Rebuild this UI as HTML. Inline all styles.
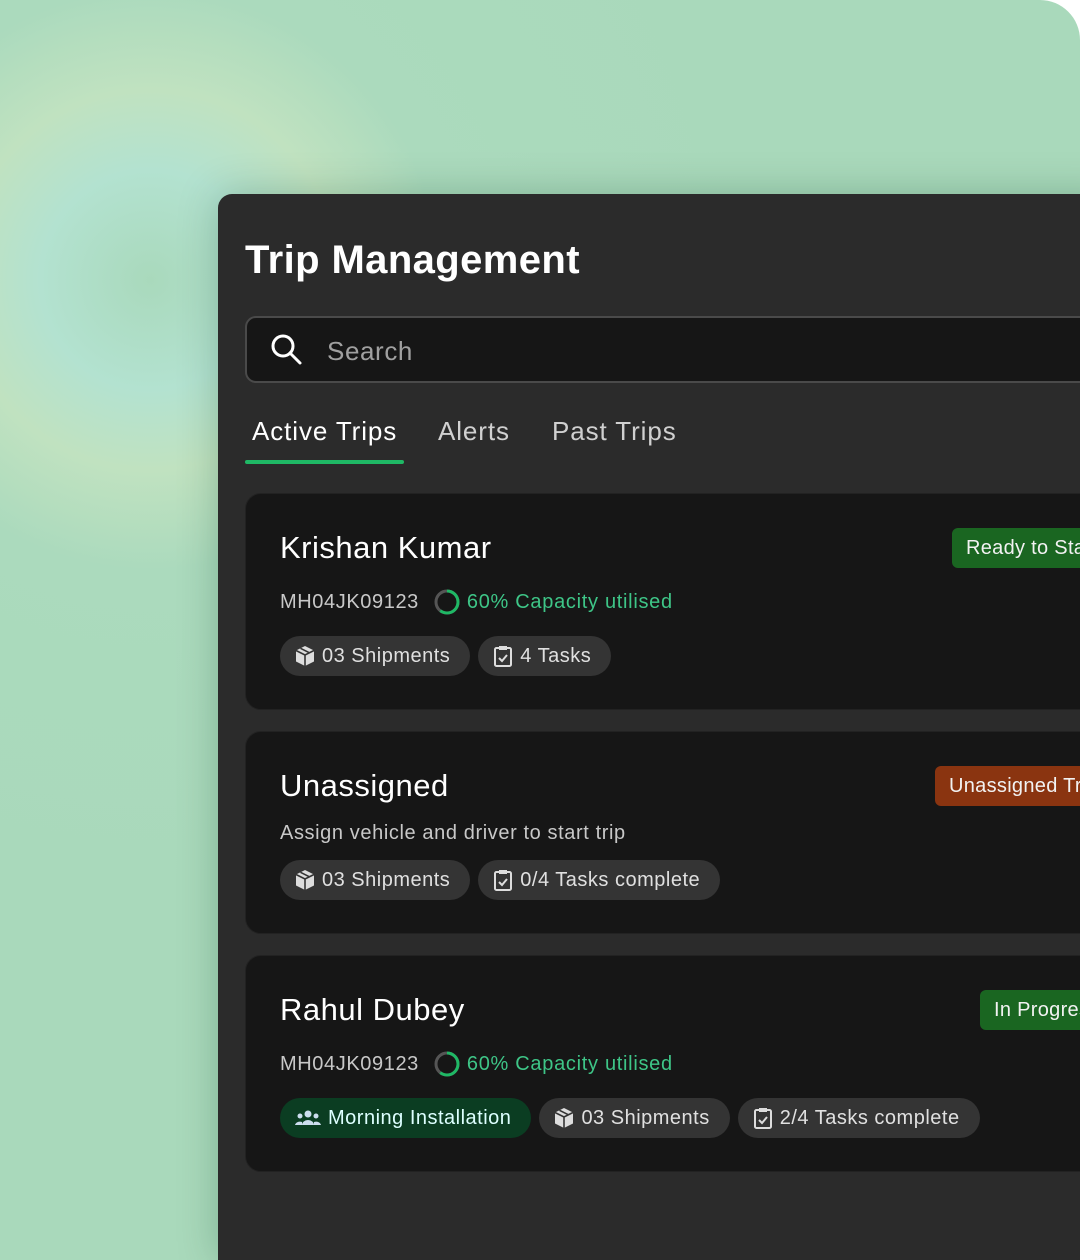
<!DOCTYPE html>
<html><head><style>
*{margin:0;padding:0;box-sizing:border-box}
html,body{width:1080px;height:1260px;overflow:hidden}
body{font-family:"Liberation Sans",sans-serif;background:#fff;position:relative}
.bg{position:absolute;inset:0;border-top-right-radius:40px;background:radial-gradient(circle at 150px 280px,#a9d9bc 0,#b3e2d0 110px,#c0e2c0 190px,#abdabd 290px,#a9d9bb 600px)}
.panel{position:absolute;left:218px;top:194px;width:900px;height:1066px;background:#2b2b2b;border-radius:14px 14px 0 0;box-shadow:0 0 40px rgba(0,60,30,.25)}
.abs{position:absolute}
h1{position:absolute;left:27px;top:44px;font-size:40px;font-weight:bold;color:#fff;letter-spacing:.4px}
.search{position:absolute;left:27px;top:122px;width:900px;height:67px;background:#161616;border:2px solid #4a4a4a;border-radius:11px}
.search span{position:absolute;left:80px;top:18px;font-size:26px;color:#a0a0a0;letter-spacing:.6px}
.tab{position:absolute;top:222px;font-size:26px;color:#d0d0d0;letter-spacing:.9px}
.card{position:absolute;left:27px;width:900px;background:#161616;border-radius:16px;border:1px solid #222}
.name{position:absolute;left:34px;font-size:31px;color:#fff;letter-spacing:.5px}
.sub{position:absolute;left:34px;font-size:20px;color:#c8c8c8;display:flex;align-items:center;letter-spacing:.6px}
.green{color:#3ec587;letter-spacing:.7px}
.pills{position:absolute;left:34px;display:flex;gap:8px}
.pill{height:40px;border-radius:20px;background:#343434;color:#e0e0e0;font-size:20px;display:flex;align-items:center;padding:0 20px 0 14px;gap:6px;letter-spacing:.5px}
.badge{position:absolute;height:40px;border-radius:6px;font-size:20px;color:#f2f2f2;padding:9px 14px;white-space:nowrap;letter-spacing:.3px}
</style></head><body>
<div class="bg"></div>
<div class="panel">
<h1>Trip Management</h1>
<div class="search">
<svg class="abs" style="left:22px;top:14px" width="36" height="36" viewBox="0 0 36 36"><circle cx="14" cy="14" r="10" fill="none" stroke="#fff" stroke-width="3"/><path d="M21 21l10 10" stroke="#fff" stroke-width="3" stroke-linecap="round"/></svg>
<span>Search</span></div>
<div class="tab" style="left:34px;color:#fff">Active Trips</div>
<div class="tab" style="left:220px">Alerts</div>
<div class="tab" style="left:334px">Past Trips</div>
<div class="abs" style="left:27px;top:266px;width:159px;height:4px;background:#1fb865;border-radius:2px"></div>

<div class="card" style="top:299px;height:217px">
<div class="name" style="top:36px">Krishan Kumar</div>
<div class="sub" style="top:94px">MH04JK09123
<svg style="margin:0 6px 0 14px" width="28" height="28" viewBox="0 0 28 28"><circle cx="14" cy="14" r="11" fill="none" stroke="#555" stroke-width="3"/><circle cx="14" cy="14" r="11" fill="none" stroke="#1fb865" stroke-width="3" stroke-dasharray="41.5 69.1" transform="rotate(-90 14 14)"/></svg><span class="green">60% Capacity utilised</span></div>
<div class="pills" style="top:142px">
<div class="pill"><svg width="22" height="22" viewBox="0 0 22 22"><path d="M11 1L20 5.5V16.5L11 21L2 16.5V5.5Z" fill="#ddd"/><path d="M2 5.5L11 10L20 5.5M11 10V21M6.5 3.3L15.5 7.8" stroke="#343434" stroke-width="1.6" fill="none"/></svg>03 Shipments</div>
<div class="pill"><svg width="22" height="22" viewBox="0 0 22 22"><rect x="3" y="3" width="16" height="18" rx="1.5" fill="none" stroke="#ddd" stroke-width="2"/><rect x="7" y="1" width="8" height="4" fill="#ddd"/><path d="M7 13l3 3 5-6" stroke="#ddd" stroke-width="2" fill="none"/></svg>4 Tasks</div></div>
<div class="badge" style="left:706px;top:34px;background:#1a6621">Ready to Start</div>
</div>

<div class="card" style="top:537px;height:203px">
<div class="name" style="top:36px">Unassigned</div>
<div class="sub" style="top:90px">Assign vehicle and driver to start trip</div>
<div class="pills" style="top:128px">
<div class="pill"><svg width="22" height="22" viewBox="0 0 22 22"><path d="M11 1L20 5.5V16.5L11 21L2 16.5V5.5Z" fill="#ddd"/><path d="M2 5.5L11 10L20 5.5M11 10V21M6.5 3.3L15.5 7.8" stroke="#343434" stroke-width="1.6" fill="none"/></svg>03 Shipments</div>
<div class="pill"><svg width="22" height="22" viewBox="0 0 22 22"><rect x="3" y="3" width="16" height="18" rx="1.5" fill="none" stroke="#ddd" stroke-width="2"/><rect x="7" y="1" width="8" height="4" fill="#ddd"/><path d="M7 13l3 3 5-6" stroke="#ddd" stroke-width="2" fill="none"/></svg>0/4 Tasks complete</div></div>
<div class="badge" style="left:689px;top:34px;background:#8a3410">Unassigned Trip</div>
</div>

<div class="card" style="top:761px;height:217px">
<div class="name" style="top:36px">Rahul Dubey</div>
<div class="sub" style="top:94px">MH04JK09123
<svg style="margin:0 6px 0 14px" width="28" height="28" viewBox="0 0 28 28"><circle cx="14" cy="14" r="11" fill="none" stroke="#555" stroke-width="3"/><circle cx="14" cy="14" r="11" fill="none" stroke="#1fb865" stroke-width="3" stroke-dasharray="41.5 69.1" transform="rotate(-90 14 14)"/></svg><span class="green">60% Capacity utilised</span></div>
<div class="pills" style="top:142px">
<div class="pill" style="background:#0b3d22;color:#dff"><svg width="28" height="18" viewBox="0 0 28 18"><circle cx="14" cy="5" r="3.5" fill="#cde"/><path d="M8 16a6 5 0 0 1 12 0z" fill="#cde"/><circle cx="6" cy="7" r="2.5" fill="#cde"/><circle cx="22" cy="7" r="2.5" fill="#cde"/><path d="M1 16a5 4 0 0 1 7-3v3zM27 16a5 4 0 0 0-7-3v3z" fill="#cde"/></svg>Morning Installation</div>
<div class="pill"><svg width="22" height="22" viewBox="0 0 22 22"><path d="M11 1L20 5.5V16.5L11 21L2 16.5V5.5Z" fill="#ddd"/><path d="M2 5.5L11 10L20 5.5M11 10V21M6.5 3.3L15.5 7.8" stroke="#343434" stroke-width="1.6" fill="none"/></svg>03 Shipments</div>
<div class="pill"><svg width="22" height="22" viewBox="0 0 22 22"><rect x="3" y="3" width="16" height="18" rx="1.5" fill="none" stroke="#ddd" stroke-width="2"/><rect x="7" y="1" width="8" height="4" fill="#ddd"/><path d="M7 13l3 3 5-6" stroke="#ddd" stroke-width="2" fill="none"/></svg>2/4 Tasks complete</div></div>
<div class="badge" style="left:734px;top:34px;background:#1a6621">In Progress</div>
</div>
</div>
</body></html>
